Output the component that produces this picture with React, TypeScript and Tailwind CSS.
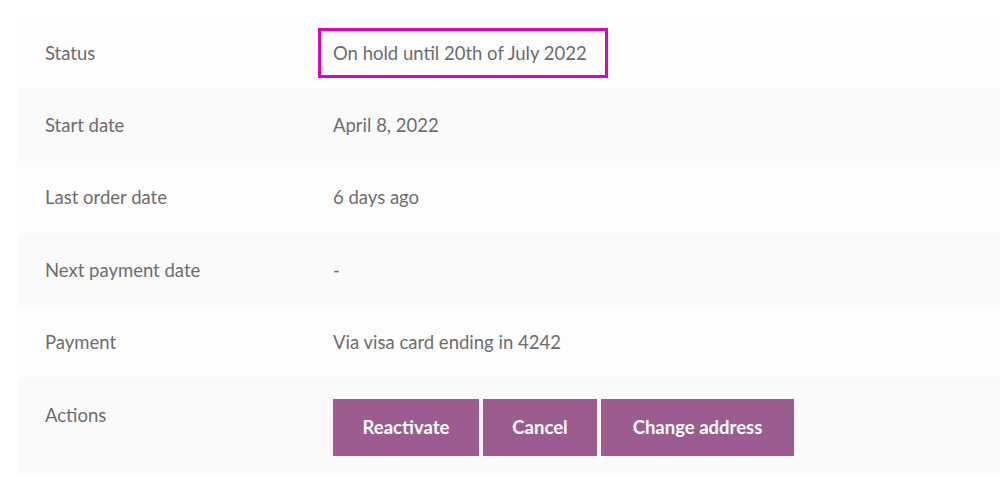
import React from 'react'

const rows = [
  { label: 'Status', value: 'On hold until 20th of July 2022', highlight: true },
  { label: 'Start date', value: 'April 8, 2022' },
  { label: 'Last order date', value: '6 days ago' },
  { label: 'Next payment date', value: '-' },
  { label: 'Payment', value: 'Via visa card ending in 4242' },
]

const actions = [
  { label: 'Reactivate', w: 'w-[146px]' },
  { label: 'Cancel', w: 'w-[114px]' },
  { label: 'Change address', w: 'w-[193px]' },
]

export default function App() {
  return (
    <div className="min-h-screen bg-white pl-[17px] pt-[17px] text-[18.5px] text-[#6d6d6d]" style={{ fontFamily: '"Source Sans Pro", Lato, "Liberation Sans", sans-serif' }}>
      <div className="w-[983px]">
        {rows.map((row, i) => (
          <div key={i} className={`flex h-[72.2px] items-center leading-[28px] ${i % 2 === 0 ? 'bg-[#fdfdfd]' : 'bg-[#fafafa]'}`}>
            <div className="w-[316px] pl-[28px]">{row.label}</div>
            <div className="flex-1">
              {row.highlight ? (
                <span className="relative inline-block">
                  {row.value}
                  <span className="pointer-events-none absolute -left-[15px] -right-[21px] -top-[11px] -bottom-[11px] border-[3px] border-[#e000bf]" />
                </span>
              ) : (
                row.value
              )}
            </div>
          </div>
        ))}
        <div className="flex h-[97px] bg-[#fafafa] leading-[28px]">
          <div className="w-[316px] pl-[28px] pt-[23px]">Actions</div>
          <div className="flex flex-1 gap-[4px] pt-[21px]">
            {actions.map((a) => (
              <button key={a.label} className={`h-[57px] ${a.w} bg-[#9c5c8f] text-center font-bold text-white`}>
                {a.label}
              </button>
            ))}
          </div>
        </div>
      </div>
    </div>
  )
}
